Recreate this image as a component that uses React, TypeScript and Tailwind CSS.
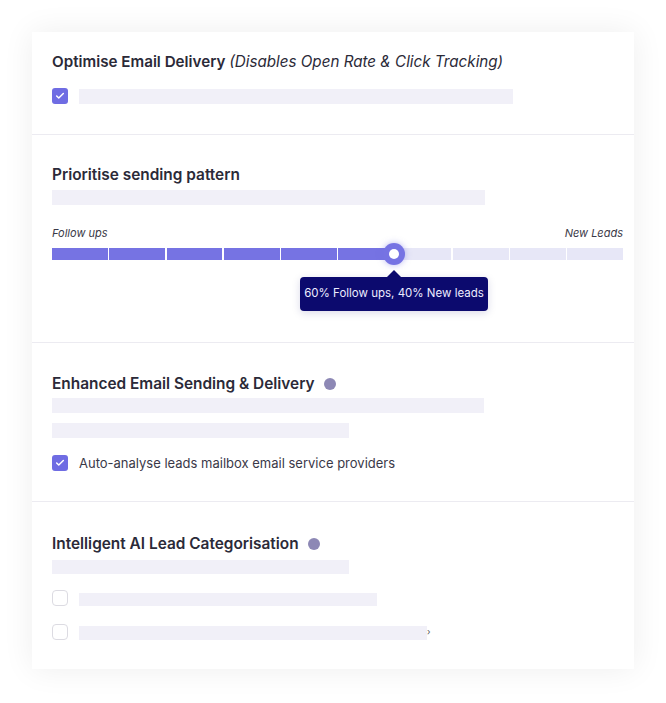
import { Check } from 'lucide-react';

const font = { fontFamily: 'Inter, "Noto Sans", sans-serif' };

function Bar({ w, h = 'h-[15px]', className = '' }: { w: string; h?: string; className?: string }) {
  return <div className={`${w} ${h} bg-[#f1f0f8] ${className}`} />;
}

function Box({ checked }: { checked?: boolean }) {
  if (checked) {
    return (
      <div className="w-4 h-4 rounded-[3px] bg-[#6f6ce3] flex items-center justify-center shrink-0">
        <Check className="w-[10px] h-[10px] text-white" strokeWidth={3.5} />
      </div>
    );
  }
  return <div className="w-4 h-4 rounded-[4px] border border-[#dcdbe2] bg-white shrink-0" />;
}

function Title({ children, dot }: { children: React.ReactNode; dot?: boolean }) {
  return (
    <div className="flex items-center h-5 text-[15.4px] leading-5 font-semibold text-[#2b2a38]">
      <span>{children}</span>
      {dot && <span className="ml-[9px] w-3 h-3 rounded-full bg-[#8d88b5]" />}
    </div>
  );
}

export default function App() {
  const segments = Array.from({ length: 10 }, (_, i) => i);

  return (
    <div className="w-[666px] h-[703px] bg-white pt-[32px] pl-[32px]" style={font}>
      <div className="w-[602px] h-[637px] bg-white shadow-[0_0_30px_rgba(0,0,0,0.07)]">
        {/* Optimise delivery */}
        <section className="pl-5 pt-5 pb-[30px] border-b border-[#ecebf1]">
          <div className="text-[15.2px] leading-5 text-[#2b2a38]">
            <span className="font-semibold">Optimise Email Delivery </span>
            <span className="italic">(Disables Open Rate &amp; Click Tracking)</span>
          </div>
          <div className="mt-4 flex items-center gap-[11px]">
            <Box checked />
            <Bar w="w-[434px]" />
          </div>
        </section>

        {/* Sending pattern */}
        <section className="pl-5 pt-[30px] pb-[82px] border-b border-[#ecebf1]">
          <Title>Prioritise sending pattern</Title>
          <Bar w="w-[433px]" className="mt-[5px]" />
          <div className="mt-[21px] w-[571px] flex justify-between text-[11px] leading-[14px] italic text-[#3b3a48]">
            <span>Follow ups</span>
            <span>New Leads</span>
          </div>
          <div className="relative mt-2 w-[571px] h-3 flex gap-[1.5px]">
            {segments.map((i) => (
              <div key={i} className={`flex-1 ${i < 6 ? 'bg-[#7673e3]' : 'bg-[#e7e7f7]'}`} />
            ))}
            <div className="absolute left-[342px] top-1/2 -translate-x-1/2 -translate-y-1/2 w-[22px] h-[22px] rounded-full bg-[#7673e3] flex items-center justify-center shadow-[0_0_6px_rgba(118,115,227,0.5)]">
              <div className="w-[10px] h-[10px] rounded-full bg-white" />
            </div>
            <div className="absolute left-[342px] top-[22px] -translate-x-1/2 flex flex-col items-center">
              <div className="w-0 h-0 border-l-[7px] border-r-[7px] border-b-[7px] border-l-transparent border-r-transparent border-b-[#0c0a6e]" />
              <div className="w-[188px] h-[34px] rounded-[4px] bg-[#0c0a6e] text-[11.5px] text-[#ececff] flex items-center justify-center whitespace-nowrap shadow-[0_2px_8px_rgba(12,10,110,0.15)]">
                60% Follow ups, 40% New leads
              </div>
            </div>
          </div>
        </section>

        {/* Enhanced sending */}
        <section className="pl-5 pt-[31px] pb-[30px] border-b border-[#ecebf1]">
          <Title dot>Enhanced Email Sending &amp; Delivery</Title>
          <Bar w="w-[432px]" className="mt-1" />
          <Bar w="w-[297px]" className="mt-[10px]" />
          <div className="mt-[17px] flex items-center gap-[11px]">
            <Box checked />
            <span className="text-[13px] leading-4 text-[#3a3948]">
              Auto-analyse leads mailbox email service providers
            </span>
          </div>
        </section>

        {/* AI categorisation */}
        <section className="pl-5 pt-[32px]">
          <Title dot>Intelligent AI Lead Categorisation</Title>
          <Bar w="w-[297px]" h="h-[14px]" className="mt-[6px]" />
          <div className="mt-[16px] flex items-center gap-[11px]">
            <Box />
            <Bar w="w-[298px]" h="h-[13px]" className="mt-[3px]" />
          </div>
          <div className="mt-[18px] flex items-center gap-[11px]">
            <Box />
            <Bar w="w-[348px]" h="h-[14px]" className="mt-[2px]" />
            <span className="-ml-[11px] text-[9px] text-[#555]">›</span>
          </div>
        </section>
      </div>
    </div>
  );
}
